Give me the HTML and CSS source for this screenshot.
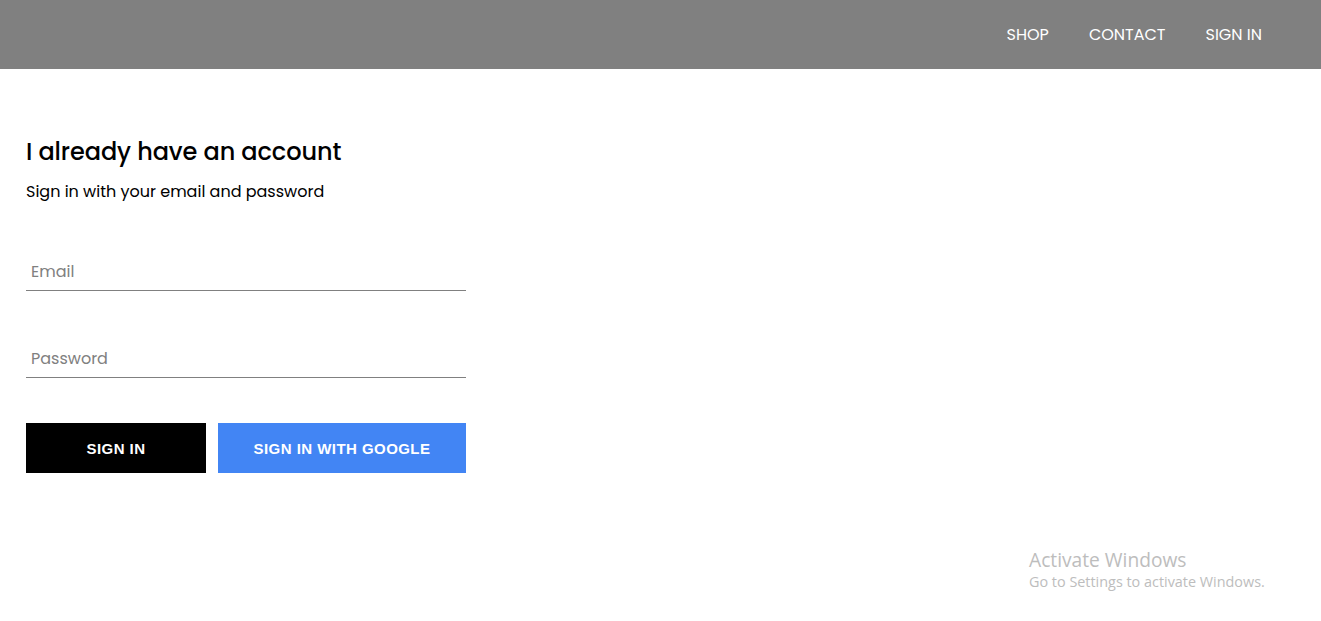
FILE: index.html
```html
<!DOCTYPE html>
<html>
<head>
<meta charset="utf-8">
<link rel="stylesheet" href="styles.css">
</head>
<body>
<header class="header">
  <nav class="nav">
    <a class="nav-link" href="#">SHOP</a>
    <a class="nav-link" href="#">CONTACT</a>
    <a class="nav-link" href="#">SIGN IN</a>
  </nav>
</header>
<main class="page">
  <section class="sign-in">
    <h2 class="title">I already have an account</h2>
    <p class="subtitle">Sign in with your email and password</p>
    <form class="form">
      <div class="group">
        <input class="input" type="email" placeholder="Email">
      </div>
      <div class="group">
        <input class="input" type="password" placeholder="Password">
      </div>
      <div class="buttons">
        <button class="btn btn-dark" type="button">SIGN IN</button>
        <button class="btn btn-google" type="button">SIGN IN WITH GOOGLE</button>
      </div>
    </form>
  </section>
</main>
<div class="watermark">
  <div class="wm-title">Activate Windows</div>
  <div class="wm-sub">Go to Settings to activate Windows.</div>
</div>
</body>
</html>
```
FILE: styles.css
```css
* { box-sizing: border-box; }
body {
  margin: 0;
  font-family: "Poppins", Inter, "Noto Sans", sans-serif;
  color: #000;
  background: #fff;
}
.header {
  height: 69px;
  background: #808080;
  display: flex;
  justify-content: flex-end;
  align-items: center;
  padding-right: 59px;
}
.nav {
  display: flex;
  gap: 40px;
}
.nav-link {
  color: #fff;
  text-decoration: none;
  font-size: 16px;
  line-height: 20px;
}
.page {
  padding: 0 26px;
}
.sign-in {
  width: 440px;
  display: flex;
  flex-direction: column;
}
.title {
  margin: 68px 0 0;
  font-size: 24px;
  font-weight: 500;
  line-height: 30px;
  letter-spacing: -0.08px;
}
.subtitle {
  margin: 14px 0 0;
  font-size: 16px;
  line-height: 22px;
}
.form {
  margin-top: 47px;
}
.group {
  margin-bottom: 46px;
}
.input {
  display: block;
  width: 100%;
  border: none;
  border-bottom: 1px solid #808080;
  padding: 11px 5px 7px;
  font-family: inherit;
  font-size: 16px;
  line-height: 22px;
  outline: none;
  background: transparent;
}
.input::placeholder { color: #808080; }
.buttons {
  display: flex;
  gap: 12px;
  margin-top: -1px;
}
.btn {
  height: 50px;
  border: none;
  color: #fff;
  font-family: "Liberation Sans", Arial, sans-serif;
  font-weight: bold;
  font-size: 15px;
  letter-spacing: 0.45px;
  cursor: pointer;
}
.btn-dark { width: 180px; background: #000; }
.btn-google { width: 248px; background: #4285f4; }
.watermark {
  position: absolute;
  left: 1029px;
  top: 547px;
  color: #bdbdbd;
  font-family: "Open Sans", "Noto Sans", sans-serif;
}
.wm-title { font-size: 19.2px; line-height: 25px; }
.wm-sub { font-size: 14.4px; line-height: 20px; }
```
